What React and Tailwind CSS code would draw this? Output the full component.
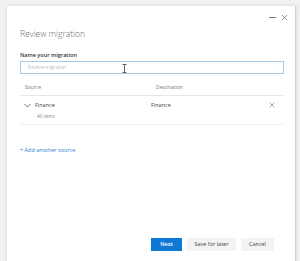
import React from 'react';

const ChevronDown = () => (
  <svg width="7" height="5" viewBox="0 0 7 5" fill="none" stroke="#555" strokeWidth="0.8">
    <path d="M0.5 1 L3.5 4 L6.5 1" />
  </svg>
);

const Close = ({ size = 7, color = '#666' }) => (
  <svg width={size} height={size} viewBox="0 0 8 8" fill="none" stroke={color} strokeWidth="0.9">
    <path d="M1 1 L7 7 M7 1 L1 7" />
  </svg>
);

const IBeam = () => (
  <svg width="5" height="9" viewBox="0 0 5 9" fill="none" stroke="#555" strokeWidth="0.9">
    <path d="M0.5 0.5 H4.5 M2.5 0.5 V8.5 M0.5 8.5 H4.5" />
  </svg>
);

export default function App() {
  return (
    <div
      className="w-[300px] h-[261px] overflow-hidden bg-[#f2f2f2] pt-[6px] pl-[7px] pr-[4px]"
      style={{ fontFamily: '"Open Sans", "Noto Sans", sans-serif' }}
    >
      <div className="h-[260px] bg-white border-r border-[#d0d0d0] shadow-[0_0_4px_rgba(0,0,0,0.12)] flex flex-col">
        {/* title bar */}
        <div className="flex justify-end items-center gap-[5px] pr-[7px] pt-[7px] h-[16px]">
          <div className="w-[7px] h-px bg-[#777]" />
          <Close size={7} color="#777" />
        </div>

        <div className="px-[13px] flex-1 flex flex-col">
          <h1 className="mt-[6px] text-[8.5px] leading-[12px] text-[#6b6b6b] font-light">Review migration</h1>

          <label className="mt-[11px] text-[5.5px] leading-[8px] font-semibold text-[#333]">Name your migration</label>
          <div className="mt-[2px] h-[13px] w-[264px] border border-[#a9cbe8] flex items-center pl-[7px] relative">
            <span className="text-[4.5px] text-[#b8b8b8] blur-[0.6px]">Finance-migration</span>
            <div className="absolute left-[101px] top-[2px]">
              <IBeam />
            </div>
          </div>

          {/* table */}
          <div className="mt-[10px] w-[264px]">
            <div className="grid grid-cols-[131px_1fr] pl-[5px] pb-[4px] border-b border-[#e6e6e6] text-[5px] leading-[7px] text-[#777]">
              <span>Source</span>
              <span>Destination</span>
            </div>
            <div className="grid grid-cols-[131px_1fr_20px] items-start pt-[5px] pb-[5px] border-b border-[#f3f3f3]">
              <div className="flex flex-col pl-[4px]">
                <div className="flex items-center gap-[4px]">
                  <ChevronDown />
                  <span className="text-[5.5px] leading-[8px] text-[#444]">Finance</span>
                </div>
                <span className="pl-[13px] mt-[4px] text-[4.5px] leading-[6px] text-[#888]">All items</span>
              </div>
              <span className="text-[5.5px] leading-[8px] text-[#444]">Finance</span>
              <div className="pt-[1px] pl-[5px]">
                <Close size={6} color="#777" />
              </div>
            </div>
          </div>

          <div className="mt-[21px] text-[5.5px] leading-[8px] text-[#2b7cd3]">+ Add another source</div>

          <div className="flex-1" />

          <div className="flex justify-end gap-[5px] pr-[8px] mb-[15px] text-[5.5px]">
            <button className="w-[31px] h-[13px] bg-[#0f78d4] text-white font-semibold">Next</button>
            <button className="w-[49px] h-[13px] bg-[#f3f3f3] text-[#444]">Save for later</button>
            <button className="w-[33px] h-[13px] bg-[#f3f3f3] text-[#444]">Cancel</button>
          </div>
        </div>
      </div>
    </div>
  );
}
